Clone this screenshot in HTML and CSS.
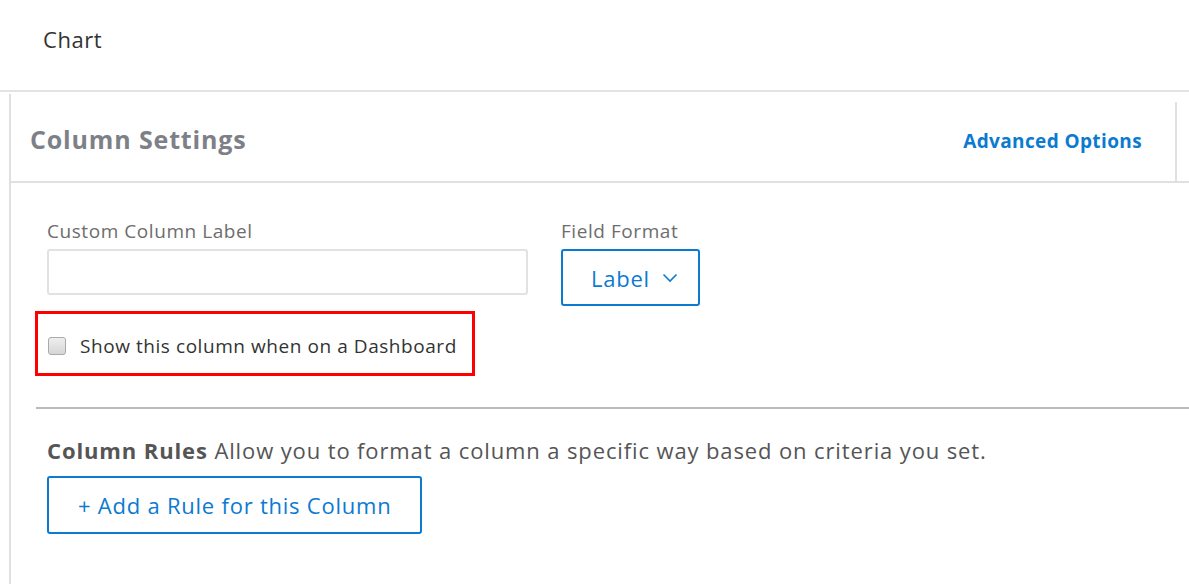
FILE: index.html
```html
<!DOCTYPE html>
<html lang="en">
<head>
  <meta charset="UTF-8">
  <meta name="viewport" content="width=device-width, initial-scale=1.0">
  <title>Column Settings</title>
  <link rel="stylesheet" href="styles.css">
</head>
<body>
  <header class="topbar">
    <span class="topbar-title">Chart</span>
  </header>

  <section class="panel">
    <div class="panel-head">
      <h2 class="panel-title">Column Settings</h2>
      <div class="panel-actions">
        <a class="advanced-link" href="#">Advanced Options</a>
      </div>
    </div>

    <div class="panel-body">
      <div class="fields">
        <div class="field field-label">
          <label for="customLabel">Custom Column Label</label>
          <input type="text" id="customLabel" class="text-input">
        </div>
        <div class="field">
          <label>Field Format</label>
          <button class="select-btn" type="button">
            Label
            <svg class="chevron" width="16" height="10" viewBox="0 0 16 10"><path d="M1.5 1.5 L8 8 L14.5 1.5" fill="none" stroke="currentColor" stroke-width="1.6"/></svg>
          </button>
        </div>
      </div>

      <div class="highlight">
        <label class="check-row">
          <span class="checkbox"></span>
          Show this column when on a Dashboard
        </label>
      </div>

      <hr class="divider">

      <div class="rules">
        <p class="rules-text"><strong>Column Rules</strong> Allow you to format a column a specific way based on criteria you set.</p>
        <button class="outline-btn" type="button">+ Add a Rule for this Column</button>
      </div>
    </div>
  </section>
</body>
</html>
```

FILE: styles.css
```css
body { margin: 0; font-family: "Open Sans", Lato, sans-serif; letter-spacing: 0.035em; color: #333; background: #fff; }

.topbar { height: 92px; display: flex; align-items: flex-start; padding: 24px 0 0 43px; box-sizing: border-box; border-bottom: 2px solid #e3e3e3; }
.topbar-title { font-size: 22px; color: #333; }

.panel { margin: 2px 0 0 9px; border-left: 2px solid #e0e0e0; min-height: 490px; }

.panel-head { height: 87px; display: flex; justify-content: space-between; padding: 0 12px 0 19px; border-bottom: 2px solid #e0e0e0; }
.panel-title { margin: 0; align-self: center; margin-top: 2px; font-size: 25px; font-weight: 700; letter-spacing: 0.034em; color: #7d8187; }
.panel-actions { display: flex; align-items: center; margin-top: 8px; padding: 0 33px 2px 0; border-right: 2px solid #e0e0e0; }
.advanced-link { font-size: 19px; font-weight: 700; letter-spacing: 0.02em; color: #0b7ad1; text-decoration: none; }

.panel-body { padding: 35px 0 0 25px; }

.fields { display: flex; gap: 33px; padding-left: 11px; }
.field { display: flex; flex-direction: column; }
.field label { font-size: 19px; color: #6d6d6d; margin-bottom: 5px; }
.field-label { width: 481px; }
.text-input { height: 46px; box-sizing: border-box; border: 2px solid #e2e2e2; border-radius: 3px; font: inherit; }
.select-btn { display: flex; align-items: center; gap: 12px; height: 57px; padding: 0 20px 0 28px; box-sizing: border-box; background: #fff; border: 2px solid #0b7ad1; border-radius: 3px; font-family: inherit; font-size: 22px; letter-spacing: 0.035em; color: #0b7ad1; }

.highlight { display: inline-block; margin: 5px 0 0 -1px; padding: 19px 15px 14px 10px; border: 3px solid #f00; }
.check-row { display: flex; align-items: center; gap: 14px; font-size: 19px; color: #333; }
.checkbox { width: 16px; height: 16px; border: 1px solid #aaa; border-radius: 3px; background: linear-gradient(#eee, #d6d6d6); }

.divider { margin: 31px 0 0 0; border: 0; border-top: 2px solid #bbb; }

.rules { padding: 26px 0 0 11px; }
.rules-text { margin: 0 0 11px; font-size: 22px; letter-spacing: 0.04em; color: #555; }
.rules-text strong { color: #555; }
.outline-btn { height: 58px; padding: 0 29px; background: #fff; border: 2px solid #0b7ad1; border-radius: 3px; font-family: inherit; font-size: 22px; letter-spacing: 0.035em; color: #0b7ad1; }
```
